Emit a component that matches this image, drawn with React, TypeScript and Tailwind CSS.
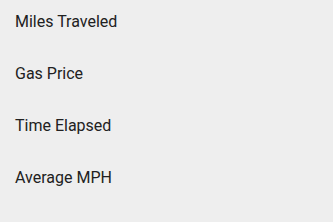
const items = ["Miles Traveled", "Gas Price", "Time Elapsed", "Average MPH", "MPG Needed For Trip"];

export default function App() {
  return (
    <div className="h-[222px] w-[333px] overflow-hidden bg-[#eeeeee] font-['Roboto',sans-serif]">
      <ul className="flex flex-col">
        {items.map((label) => (
          <li key={label} className="h-[52px] shrink-0 pl-[15px] pr-4 pt-[10px] text-[16px] leading-[24px] text-[#212121]">
            {label}
          </li>
        ))}
      </ul>
    </div>
  );
}
